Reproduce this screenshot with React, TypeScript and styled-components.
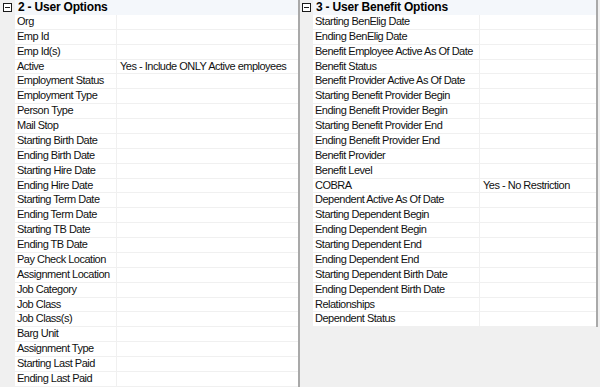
import React from 'react';
import styled, { createGlobalStyle } from 'styled-components';

const GlobalStyle = createGlobalStyle`
  html, body {
    margin: 0;
    padding: 0;
    background: #f0f0f0;
  }
  body {
    font-family: "Liberation Sans", Arial, sans-serif;
  }
`;

const ROW_H = 14.875;

const Page = styled.div`
  display: flex;
  align-items: flex-start;
  width: 600px;
  height: 387px;
  overflow: hidden;
  background: #f0f0f0;
`;

const Grid = styled.div<{ width: number; fill: boolean }>`
  width: ${p => p.width}px;
  height: ${p => (p.fill ? '387px' : 'auto')};
  background: #ffffff;
  border-right: 2px solid #a9a9a9;
  box-sizing: border-box;
  display: flex;
  flex-direction: column;
`;

const HeaderRow = styled.div`
  display: flex;
  height: ${ROW_H}px;
  background: #f4f7fb;
`;

const Gutter = styled.div<{ width: number }>`
  width: ${p => p.width}px;
  flex: none;
  background: #f0f0f0;
  display: flex;
  align-items: center;
  justify-content: center;
`;

const Toggle = styled.span`
  width: 7px;
  height: 7px;
  border: 1px solid #1a1a1a;
  position: relative;
  background: #fff;

  &::after {
    content: '';
    position: absolute;
    left: 1px;
    right: 1px;
    top: 3px;
    height: 1px;
    background: #1a1a1a;
  }
`;

const HeaderText = styled.div`
  font-weight: bold;
  font-size: 12px;
  letter-spacing: -0.2px;
  line-height: ${ROW_H}px;
  padding-left: 3px;
  color: #000;
  white-space: nowrap;
`;

const Row = styled.div`
  display: flex;
  height: ${ROW_H}px;
`;

const Cell = styled.div<{ width?: number }>`
  ${p => (p.width ? `width: ${p.width}px; flex: none;` : 'flex: 1;')}
  box-sizing: border-box;
  border-bottom: 1px solid #f0f0f0;
  font-size: 11px;
  letter-spacing: -0.5px;
  line-height: ${ROW_H - 1}px;
  padding-left: 2px;
  color: #111;
  white-space: nowrap;
  overflow: hidden;
`;

const ValueCell = styled(Cell)`
  border-left: 1px solid #f0f0f0;
  padding-left: 3px;
`;

interface Item {
  label: string;
  value?: string;
}

interface SectionProps {
  title: string;
  items: Item[];
  width: number;
  gutter: number;
  labelWidth: number;
  fill: boolean;
}

const Section: React.FC<SectionProps> = ({ title, items, width, gutter, labelWidth, fill }) => (
  <Grid width={width} fill={fill}>
    <HeaderRow>
      <Gutter width={gutter}>
        <Toggle />
      </Gutter>
      <HeaderText>{title}</HeaderText>
    </HeaderRow>
    {items.map(item => (
      <Row key={item.label}>
        <Gutter width={gutter} />
        <Cell width={labelWidth}>{item.label}</Cell>
        <ValueCell>{item.value}</ValueCell>
      </Row>
    ))}
  </Grid>
);

const userOptions: Item[] = [
  { label: 'Org' },
  { label: 'Emp Id' },
  { label: 'Emp Id(s)' },
  { label: 'Active', value: 'Yes - Include ONLY Active employees' },
  { label: 'Employment Status' },
  { label: 'Employment Type' },
  { label: 'Person Type' },
  { label: 'Mail Stop' },
  { label: 'Starting Birth Date' },
  { label: 'Ending Birth Date' },
  { label: 'Starting Hire Date' },
  { label: 'Ending Hire Date' },
  { label: 'Starting Term Date' },
  { label: 'Ending Term Date' },
  { label: 'Starting TB Date' },
  { label: 'Ending TB Date' },
  { label: 'Pay Check Location' },
  { label: 'Assignment Location' },
  { label: 'Job Category' },
  { label: 'Job Class' },
  { label: 'Job Class(s)' },
  { label: 'Barg Unit' },
  { label: 'Assignment Type' },
  { label: 'Starting Last Paid' },
  { label: 'Ending Last Paid' },
];

const benefitOptions: Item[] = [
  { label: 'Starting BenElig Date' },
  { label: 'Ending BenElig Date' },
  { label: 'Benefit Employee Active As Of Date' },
  { label: 'Benefit Status' },
  { label: 'Benefit Provider Active As Of Date' },
  { label: 'Starting Benefit Provider Begin' },
  { label: 'Ending Benefit Provider Begin' },
  { label: 'Starting Benefit Provider End' },
  { label: 'Ending Benefit Provider End' },
  { label: 'Benefit Provider' },
  { label: 'Benefit Level' },
  { label: 'COBRA', value: 'Yes - No Restriction' },
  { label: 'Dependent Active As Of Date' },
  { label: 'Starting Dependent Begin' },
  { label: 'Ending Dependent Begin' },
  { label: 'Starting Dependent End' },
  { label: 'Ending Dependent End' },
  { label: 'Starting Dependent Birth Date' },
  { label: 'Ending Dependent Birth Date' },
  { label: 'Relationships' },
  { label: 'Dependent Status' },
];

const App: React.FC = () => (
  <>
    <GlobalStyle />
    <Page>
      <Section title="2 - User Options" items={userOptions} width={300} gutter={15} labelWidth={101} fill />
      <Section title="3 - User Benefit Options" items={benefitOptions} width={298} gutter={13} labelWidth={166} fill={false} />
    </Page>
  </>
);

export default App;
